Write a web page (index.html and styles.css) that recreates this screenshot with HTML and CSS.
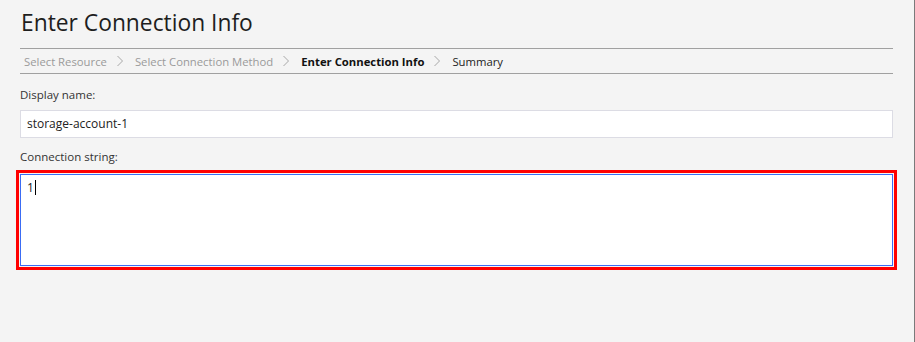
FILE: index.html
```html
<!DOCTYPE html>
<html lang="en">
<head>
<meta charset="utf-8">
<title>Enter Connection Info</title>
<link rel="stylesheet" href="styles.css">
</head>
<body>
<div class="frame">
  <div class="page">
    <h1 class="title">Enter Connection Info</h1>
    <nav class="crumbs">
      <span class="crumb done">Select Resource</span>
      <svg class="chev" width="8" height="12" viewBox="0 0 8 12"><path d="M1.5 1 L6.5 6 L1.5 11" fill="none" stroke="#a8a8a8" stroke-width="1"/></svg>
      <span class="crumb done">Select Connection Method</span>
      <svg class="chev" width="8" height="12" viewBox="0 0 8 12"><path d="M1.5 1 L6.5 6 L1.5 11" fill="none" stroke="#a8a8a8" stroke-width="1"/></svg>
      <span class="crumb current">Enter Connection Info</span>
      <svg class="chev" width="8" height="12" viewBox="0 0 8 12"><path d="M1.5 1 L6.5 6 L1.5 11" fill="none" stroke="#a8a8a8" stroke-width="1"/></svg>
      <span class="crumb next">Summary</span>
    </nav>
    <label class="label" for="dn">Display name:</label>
    <div class="input" id="dn">storage-account-1</div>
    <label class="label label-2" for="cs">Connection string:</label>
    <div class="area-wrap">
      <div class="area" id="cs"><span class="val">1</span><span class="caret"></span></div>
    </div>
  </div>
</div>
</body>
</html>
```
FILE: styles.css
```css
html, body {
  margin: 0;
  padding: 0;
}
body {
  background: #f4f4f4;
  font-family: "Open Sans", "Noto Sans", sans-serif;
  color: #333;
}
.frame {
  height: 342px;
  box-sizing: border-box;
  border-right: 1px solid #7a7a7a;
}
.page {
  padding: 0 21px 0 20px;
}
.title {
  margin: 0;
  padding: 7px 0 0 1px;
  height: 41px;
  font-size: 22.8px;
  font-weight: 400;
  line-height: 32px;
  color: #1e1e1e;
  border-bottom: 1px solid #a0a0a0;
}
.crumbs {
  display: flex;
  align-items: center;
  height: 24px;
  padding-left: 4px;
  border-bottom: 1px solid #a0a0a0;
  font-size: 11.3px;
}
.crumb.done { color: #9a9a9a; }
.crumb.current { color: #111; font-weight: 700; }
.crumb.next { color: #222; }
.chev {
  margin: 0 11px 0 9px;
}
.label {
  display: block;
  margin-top: 13px;
  font-size: 11.5px;
  line-height: 16px;
  color: #333;
}
.label-2 { margin-top: 11px; }
.input {
  margin-top: 7px;
  height: 28px;
  box-sizing: border-box;
  border: 1px solid #dcdce4;
  background: #fff;
  padding: 0 6px;
  font-size: 12px;
  line-height: 26px;
  color: #222;
}
.area-wrap {
  margin-top: 9px;
}
.area {
  height: 92px;
  box-sizing: border-box;
  border: 1px solid #3a6cf4;
  outline: 3px solid #ff0000;
  outline-offset: 1px;
  background: #fff;
  padding: 5px 6px;
  font-size: 12px;
  line-height: 16px;
  color: #222;
}
.caret {
  display: inline-block;
  width: 1px;
  height: 15px;
  background: #000;
  vertical-align: -3px;
  margin-left: 1px;
}
```
